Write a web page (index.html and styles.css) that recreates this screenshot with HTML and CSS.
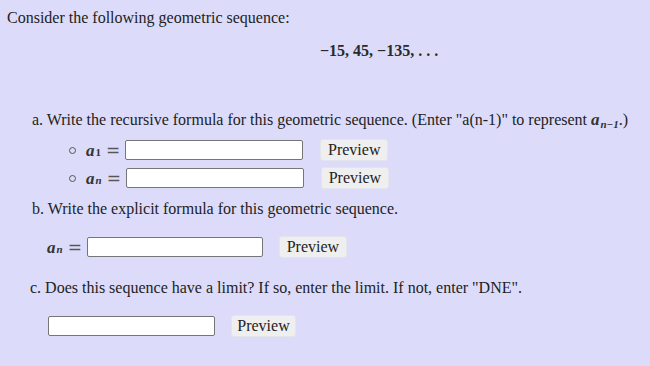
FILE: index.html
```html
<!DOCTYPE html>
<html>
<head>
<meta charset="utf-8">
<link rel="stylesheet" href="styles.css">
</head>
<body>
<div class="page">
  <p class="intro">Consider the following geometric sequence:</p>
  <div class="seq"><span class="mth">−15, 45, −135, . . .</span></div>

  <p class="q qa">a. Write the recursive formula for this geometric sequence. (Enter "a(n-1)" to represent <span class="mi">a</span><sub class="sb">n−1</sub>.)</p>
  <ul class="list">
    <li class="row r1">
      <span class="bul"></span>
      <span class="lbl"><span class="mi">a</span><sub class="sb up">1</sub><span class="eq">=</span></span>
      <input class="box" type="text">
      <button class="btn">Preview</button>
    </li>
    <li class="row r2">
      <span class="bul"></span>
      <span class="lbl"><span class="mi">a</span><sub class="sb">n</sub><span class="eq">=</span></span>
      <input class="box" type="text">
      <button class="btn">Preview</button>
    </li>
  </ul>

  <p class="q qb">b. Write the explicit formula for this geometric sequence.</p>
  <div class="row rb">
    <span class="lbl"><span class="mi">a</span><sub class="sb">n</sub><span class="eq">=</span></span>
    <input class="box" type="text">
    <button class="btn">Preview</button>
  </div>

  <p class="q qc">c. Does this sequence have a limit? If so, enter the limit. If not, enter "DNE".</p>
  <div class="row rc">
    <input class="box boxc" type="text">
    <button class="btn">Preview</button>
  </div>
</div>
</body>
</html>
```

FILE: styles.css
```css
html, body {
  margin: 0;
  padding: 0;
  background: #dcdcfa;
}
body {
  width: 650px;
  height: 366px;
  overflow: hidden;
  font-family: "Liberation Serif", "Times New Roman", serif;
  font-size: 16px;
  color: #222;
}
.page {
  padding: 9px 0 0 7px;
}
p {
  margin: 0;
}
.intro {
  line-height: 18px;
}
.seq {
  margin-top: 14px;
  padding-left: 313px;
  line-height: 20px;
}
.mth {
  font-family: "Liberation Serif", serif;
  font-size: 16px;
  font-weight: bold;
  color: #2a2a2a;
}
.q {
  line-height: 18px;
  margin-left: 25px;
}
.qa {
  margin-top: 50px;
}
.mi {
  font-family: "Liberation Serif", serif;
  font-style: italic;
  font-weight: bold;
  font-size: 17px;
  color: #333;
}
.sb {
  font-family: "Liberation Serif", serif;
  font-style: italic;
  font-weight: bold;
  font-size: 11px;
  vertical-align: -3px;
  line-height: 0;
  color: #333;
  margin-left: 1px;
}
.sb.up {
  font-style: normal;
}
.eq {
  font-family: "DejaVu Sans", sans-serif;
  font-size: 17px;
  color: #555;
  margin-left: 5px;
}
.list {
  list-style: none;
  margin: 0;
  padding: 0;
}
.row {
  display: flex;
  align-items: center;
  height: 22px;
}
.r1 {
  margin-top: 10px;
}
.r2 {
  margin-top: 6px;
}
.bul {
  width: 5px;
  height: 5px;
  border: 1.3px solid #555;
  border-radius: 50%;
  margin-left: 62px;
  margin-right: 10px;
}
.lbl {
  display: inline-flex;
  align-items: baseline;
  white-space: nowrap;
  margin-right: 5px;
}
.box {
  flex: none;
  width: 172px;
  height: 16px;
  padding: 1px 2px;
  border: 1px solid #767676;
  border-radius: 2px;
  background: #fff;
  margin: 0;
}
.btn {
  flex: none;
  font-family: "Liberation Serif", serif;
  font-size: 16px;
  color: #222;
  background: #efefef;
  border: 1px solid #e4e4ec;
  border-radius: 3px;
  height: 22px;
  width: 68px;
  padding: 0;
  margin-left: 17px;
}
.qb {
  margin-top: 11px;
}
.rb {
  margin-top: 18px;
  padding-left: 40px;
}
.rb .box {
  width: 170px;
}
.rb .btn {
  width: 68px;
  margin-left: 16px;
}
.qc {
  margin-top: 21px;
  margin-left: 23px;
}
.rc {
  margin-top: 18px;
  padding-left: 41px;
}
.boxc {
  width: 161px;
}
.rc .btn {
  width: 65px;
  margin-left: 16px;
}
```
